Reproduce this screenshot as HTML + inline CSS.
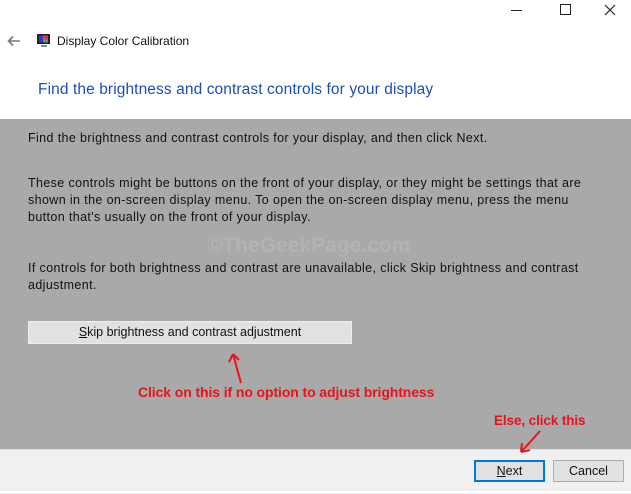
<!DOCTYPE html>
<html><head><meta charset="utf-8"><style>
body{margin:0;width:631px;height:493px;position:relative;overflow:hidden;background:#fff;font-family:"Liberation Sans",sans-serif;}
.a{position:absolute;white-space:nowrap;}
.t{font-size:12.5px;color:#111;letter-spacing:0.38px;}
.btn{position:absolute;box-sizing:border-box;font-size:12.5px;text-align:center;color:#111;}
.red{color:#e8141c;font-weight:bold;font-size:14px;letter-spacing:-0.1px;}
</style></head><body>
<div class="a" style="left:511px;top:10px;width:11px;height:1px;background:#222"></div>
<div class="a" style="left:560px;top:4px;width:9px;height:9px;border:1px solid #222"></div>
<svg class="a" style="left:604px;top:4px" width="12" height="12"><path d="M1 1L11 11M11 1L1 11" stroke="#222" stroke-width="1.2"/></svg>
<svg class="a" style="left:7px;top:35px" width="14" height="12"><path d="M13 6H2M6 1.5L1.5 6L6 10.5" stroke="#777" stroke-width="1.6" fill="none"/></svg>
<svg class="a" style="left:36px;top:33px" width="16" height="16"><rect x="1" y="1" width="13" height="10" fill="#222"/><rect x="3" y="2.5" width="9" height="7" fill="#3a7"/><rect x="3" y="2.5" width="4" height="7" fill="#33d"/><rect x="8" y="2.5" width="4" height="4" fill="#e33"/><rect x="5" y="12" width="6" height="2" fill="#888"/></svg>
<div class="a" style="left:57px;top:34px;font-size:12px;color:#111">Display Color Calibration</div>
<div class="a" style="left:38px;top:81px;font-size:15.5px;color:#1a4fb8;letter-spacing:0.1px">Find the brightness and contrast controls for your display</div>
<div class="a" style="left:0;top:119px;width:631px;height:330px;background:#a9a9a9"></div>
<div class="a t" style="left:28px;top:131px">Find the brightness and contrast controls for your display, and then click Next.</div>
<div class="a t" style="left:28px;top:176px">These controls might be buttons on the front of your display, or they might be settings that are</div>
<div class="a t" style="left:28px;top:193px">shown in the on-screen display menu. To open the on-screen display menu, press the menu</div>
<div class="a t" style="left:28px;top:210px">button that's usually on the front of your display.</div>
<div class="a" style="left:207px;top:234px;font-size:21px;font-weight:bold;color:#b3b3b3">©TheGeekPage.com</div>
<div class="a t" style="left:28px;top:261px">If controls for both brightness and contrast are unavailable, click Skip brightness and contrast</div>
<div class="a t" style="left:28px;top:278px">adjustment.</div>
<div class="btn" style="left:28px;top:321px;width:324px;height:23px;border:1px solid #eee;background:#e1e1e1;line-height:21px"><u>S</u>kip brightness and contrast adjustment</div>
<svg class="a" style="left:228px;top:350px" width="20" height="35"><path d="M13 33L5 4M5 4L1 12M5 4L11 10" stroke="#e8141c" stroke-width="2" fill="none"/></svg>
<div class="a red" style="left:138px;top:384px">Click on this if no option to adjust brightness</div>
<div class="a red" style="left:494px;top:413px;font-size:13.5px">Else, click this</div>
<div class="a" style="left:0;top:449px;width:631px;height:44px;background:#f0f0f0;border-top:1px solid #ddd"></div>
<svg class="a" style="left:515px;top:428px" width="30" height="28"><path d="M25 3L7 23M6 24L7 15M6 24L15 22" stroke="#e8141c" stroke-width="2" fill="none"/></svg>
<div class="btn" style="left:474px;top:460px;width:71px;height:22px;border:2px solid #0078d7;background:#e1e1e1;line-height:18px"><u>N</u>ext</div>
<div class="btn" style="left:553px;top:460px;width:71px;height:22px;border:1px solid #adadad;background:#e1e1e1;line-height:20px">Cancel</div>
<div class="a" style="left:0;top:491px;width:631px;height:2px;background:#fff"></div>
</body></html>
